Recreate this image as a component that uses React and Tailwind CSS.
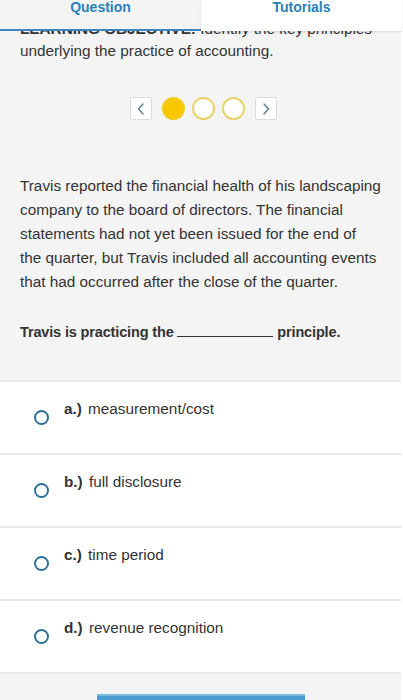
import React from "react";

const font = { fontFamily: '"Liberation Sans", Arial, sans-serif' };

const answers = [
    { key: "a.)", text: "measurement/cost" },
    { key: "b.)", text: "full disclosure" },
    { key: "c.)", text: "time period" },
    { key: "d.)", text: "revenue recognition" },
];

function Chevron({ dir }) {
    return (
        <svg width="12" height="14" viewBox="0 0 12 14" fill="none">
            <path
                d={dir === "left" ? "M8 2 L3.5 7 L8 12" : "M4 2 L8.5 7 L4 12"}
                stroke="#5b7d94"
                strokeWidth="1.4"
                strokeLinecap="round"
                strokeLinejoin="round"
            />
        </svg>
    );
}

function Tabs() {
    return (
        <div className="absolute left-0 top-0 z-10 flex h-[31px] w-full">
            <div className="flex h-full w-[201px] justify-center border-b-[2px] border-[#3b87bd] bg-[#f4f4f4]">
                <span className="text-[14px] font-semibold leading-[14px] text-[#2b80b9]">Question</span>
            </div>
            <div className="flex h-full w-[201px] justify-center bg-white shadow-[0_1px_2px_rgba(0,0,0,0.12)]">
                <span className="text-[14px] font-semibold leading-[14px] text-[#2b80b9]">Tutorials</span>
            </div>
        </div>
    );
}

function Pager() {
    return (
        <div className="flex items-center justify-center gap-[7px]">
            <button className="mr-[3px] flex h-[23px] w-[22px] items-center justify-center rounded-[2px] border border-[#dcdcdc] bg-white">
                <Chevron dir="left" />
            </button>
            <span className="h-[23px] w-[23px] rounded-full border-2 border-[#f3cc1d] bg-[#f7c800]" />
            <span className="h-[23px] w-[23px] rounded-full border-2 border-[#e9d36b] bg-white" />
            <span className="h-[23px] w-[23px] rounded-full border-2 border-[#e9d36b] bg-white" />
            <button className="ml-[3px] flex h-[23px] w-[22px] items-center justify-center rounded-[2px] border border-[#dcdcdc] bg-white">
                <Chevron dir="right" />
            </button>
        </div>
    );
}

export default function App() {
    return (
        <div className="relative h-[700px] w-[403px] overflow-hidden bg-[#f4f4f4] text-[#333]" style={font}>
            <Tabs />
            <div className="border-r-2 border-white">
                <div className="pb-[36px] pl-5 pr-[14px] pt-[18px]">
                    <p className="text-[15.3px] leading-[22px]">
                        <span className="font-bold">LEARNING OBJECTIVE:</span> Identify the key principles
                        <br />
                        underlying the practice of accounting.
                    </p>
                    <div className="mt-[35px]">
                        <Pager />
                    </div>
                    <p className="mt-[54px] whitespace-nowrap text-[15.3px] leading-[24px]">
                        Travis reported the financial health of his landscaping
                        <br />
                        company to the board of directors. The financial
                        <br />
                        statements had not yet been issued for the end of
                        <br />
                        the quarter, but Travis included all accounting events
                        <br />
                        that had occurred after the close of the quarter.
                    </p>
                    <p className="mt-[26px] text-[14.5px] font-bold leading-[24px] tracking-[-0.15px]">
                        Travis is practicing the{" "}
                        <span className="inline-block w-[96px] border-b border-[#333] align-baseline" />{" "}
                        principle.
                    </p>
                </div>
                <div className="border-t-2 border-[#e9e9e9]">
                    {answers.map((a) => (
                        <div key={a.key} className="flex h-[73px] gap-[15px] border-b-2 border-[#e9e9e9] bg-white pl-[34px] pt-[16px]">
                            <span className="mt-[12px] h-[15px] w-[15px] shrink-0 rounded-full border-[2.5px] border-[#2b719b]" />
                            <p className="text-[15.3px] leading-[22px]">
                                <span className="mr-[2px] font-bold">{a.key}</span> {a.text}
                            </p>
                        </div>
                    ))}
                </div>
                <div className="flex justify-center pt-[20px]">
                    <button className="h-[40px] w-[208px] border-t-2 border-[#7dbbe0] bg-[#4c9bd0]" />
                </div>
            </div>
        </div>
    );
}
